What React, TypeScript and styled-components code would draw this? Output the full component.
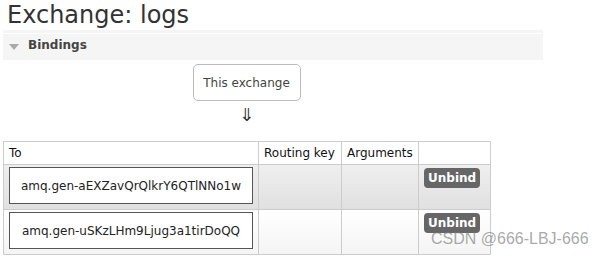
import styled, { createGlobalStyle } from 'styled-components';

const GlobalStyle = createGlobalStyle`
  html, body {
    margin: 0;
    padding: 0;
    background: #fff;
  }
  body {
    font-family: 'DejaVu Sans', Verdana, sans-serif;
    color: #444;
  }
`;

const Page = styled.div`
  position: relative;
  width: 606px;
  height: 257px;
  overflow: hidden;
  padding: 0 3px;
  box-sizing: border-box;
`;

const Title = styled.h1`
  margin: 0;
  padding: 1px 0 0 4px;
  height: 29px;
  font-size: 24px;
  font-weight: normal;
  line-height: 28px;
  color: #333;
`;

const SectionBar = styled.div`
  display: flex;
  align-items: center;
  gap: 9px;
  width: 540px;
  height: 30px;
  padding-left: 6px;
  box-sizing: border-box;
  background: linear-gradient(#f5f5f5 0 3px, #fff 3px 4px, #f5f5f5 4px);
  font-size: 12px;
  font-weight: bold;
  color: #444;
`;

const Caret = styled.span`
  width: 0;
  height: 0;
  border-left: 5px solid transparent;
  border-right: 5px solid transparent;
  border-top: 6px solid #aaa;
  margin-top: 3px;
`;

const Diagram = styled.div`
  display: flex;
  flex-direction: column;
  align-items: center;
  width: 487px;
  padding-top: 4px;
`;

const SourceBox = styled.div`
  display: flex;
  align-items: center;
  justify-content: center;
  width: 108px;
  height: 37px;
  box-sizing: border-box;
  border: 1px solid #bbb;
  border-radius: 5px;
  font-size: 12px;
  color: #444;
`;

const Arrow = styled.div`
  height: 40px;
  font-size: 18px;
  line-height: 28px;
  color: #333;
`;

const Table = styled.table`
  border-collapse: collapse;
  table-layout: fixed;
  width: 487px;
  font-size: 12px;
  color: #111;
`;

const HeadCell = styled.th<{ $w: number }>`
  width: ${(p) => p.$w}px;
  height: 23px;
  padding: 0 5px;
  text-align: left;
  font-weight: normal;
  white-space: nowrap;
  border: 1px solid #ccc;
  background: #fff;
  box-sizing: border-box;
`;

const Row = styled.tr<{ $alt?: boolean }>`
  background: ${(p) =>
    p.$alt
      ? 'linear-gradient(#ffffff, #f4f4f4)'
      : 'linear-gradient(#efefef, #e0e0e0)'};
`;

const Cell = styled.td`
  height: 45px;
  padding: 2px 5px;
  border: 1px solid #ccc;
  vertical-align: top;
  box-sizing: border-box;
`;

const QueueBox = styled.div`
  display: flex;
  align-items: center;
  justify-content: center;
  width: 244px;
  height: 37px;
  box-sizing: border-box;
  border: 1px solid #555;
  background: #fff;
  font-size: 12px;
  color: #222;
`;

const UnbindButton = styled.button`
  display: block;
  margin-top: 1px;
  padding: 2px 4px;
  border: none;
  border-radius: 4px;
  background: #666;
  color: #fff;
  font-family: 'DejaVu Sans', Verdana, sans-serif;
  font-size: 12px;
  font-weight: bold;
  line-height: 16px;
`;

const Watermark = styled.div`
  position: absolute;
  left: 431px;
  top: 230px;
  font-family: 'Liberation Sans', Arial, sans-serif;
  font-size: 16px;
  color: rgba(120, 120, 120, 0.65);
  white-space: nowrap;
`;

const bindings = ['amq.gen-aEXZavQrQlkrY6QTlNNo1w', 'amq.gen-uSKzLHm9Ljug3a1tirDoQQ'];

export default function App() {
  return (
    <Page>
      <GlobalStyle />
      <Title>Exchange: logs</Title>
      <SectionBar>
        <Caret />
        Bindings
      </SectionBar>
      <Diagram>
        <SourceBox>This exchange</SourceBox>
        <Arrow>⇓</Arrow>
      </Diagram>
      <Table>
        <thead>
          <tr>
            <HeadCell $w={255}>To</HeadCell>
            <HeadCell $w={83}>Routing key</HeadCell>
            <HeadCell $w={77}>Arguments</HeadCell>
            <HeadCell $w={72}></HeadCell>
          </tr>
        </thead>
        <tbody>
          {bindings.map((name, index) => (
            <Row key={name} $alt={index % 2 === 1}>
              <Cell>
                <QueueBox>{name}</QueueBox>
              </Cell>
              <Cell></Cell>
              <Cell></Cell>
              <Cell>
                <UnbindButton>Unbind</UnbindButton>
              </Cell>
            </Row>
          ))}
        </tbody>
      </Table>
      <Watermark>CSDN @666-LBJ-666</Watermark>
    </Page>
  );
}
